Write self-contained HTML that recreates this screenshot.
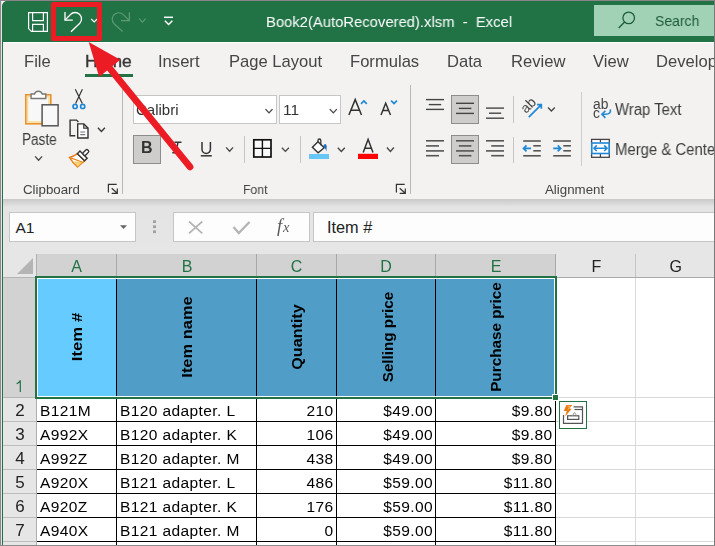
<!DOCTYPE html>
<html><head><meta charset="utf-8"><style>
html,body{margin:0;padding:0;}
body{width:715px;height:546px;position:relative;overflow:hidden;background:#fff;font-family:"Liberation Sans",sans-serif;}
svg{overflow:visible}
</style></head><body>
<div style="position:absolute;left:2px;top:1px;width:712px;height:41px;background:#217346;border-top-left-radius:5px"></div>
<svg style="position:absolute;left:0px;top:0px;" width="715" height="546" viewBox="0 0 715 546"><path d="M28.6 12.6 H47.4 V31.4 H31.4 L28.6 28.6 Z" fill="none" stroke="#fff" stroke-width="1.2"/><path d="M32.6 12.6 V20.6 H43.4 V12.6" fill="none" stroke="#fff" stroke-width="1.2"/><path d="M32.6 31.4 V24.4 H43.4 V31.4" fill="none" stroke="#fff" stroke-width="1.2"/><path d="M65 12 V20.2 H72.8" fill="none" stroke="#fff" stroke-width="1.3"/><path d="M65 20 L70.5 14.5 A6.3 6.3 0 0 1 79.8 23.2 L71 31.8" fill="none" stroke="#fff" stroke-width="1.3"/><path d="M91.2 19.0 L94.2 22.0 L97.2 19.0" fill="none" stroke="#fff" stroke-width="1.1"/><path d="M129.4 12.3 V20.7 H121" fill="none" stroke="#5d9a76" stroke-width="1.2"/><path d="M129.4 20.7 L123.5 14.8 A6.5 6.5 0 0 0 114 23.7 L122.7 31.5" fill="none" stroke="#5d9a76" stroke-width="1.2"/><path d="M139.15 18.65 L142.4 22.15 L145.65 18.65" fill="none" stroke="#5d9a76" stroke-width="1.1"/><path d="M164 17.3 H173" stroke="#fff" stroke-width="1.5"/><path d="M164.85 20.700000000000003 L168.6 24.5 L172.35 20.700000000000003" fill="none" stroke="#fff" stroke-width="1.5"/></svg>
<div style="position:absolute;left:51px;top:2px;width:41px;height:29px;border:5px solid #ec1c24;border-radius:2px"></div>
<div style="position:absolute;left:265.8px;top:14.00px;font-size:15.2px;line-height:15.2px;color:#fff;font-weight:normal;white-space:pre;will-change:transform;transform:scaleX(0.975);transform-origin:0 0;">Book2(AutoRecovered).xlsm  -  Excel</div>
<div style="position:absolute;left:594px;top:5px;width:120px;height:31px;background:#a1d2b5"></div>
<svg style="position:absolute;left:594px;top:5px;" width="120" height="31" viewBox="594 5 120 31"><circle cx="628.7" cy="17.9" r="5.8" fill="none" stroke="#1f5c3b" stroke-width="1.3"/><path d="M624.6 22 L618.7 28" stroke="#1f5c3b" stroke-width="1.4"/></svg>
<div style="position:absolute;left:655px;top:13.00px;font-size:15.2px;line-height:15.2px;color:#1f5c3b;font-weight:normal;white-space:pre;will-change:transform;transform:scaleX(0.92);transform-origin:0 0;">Search</div>
<div style="position:absolute;left:3px;top:42px;width:711px;height:1px;background:#fff"></div>
<div style="position:absolute;left:3px;top:43px;width:711px;height:156px;background:#f3f2f1"></div>
<div style="position:absolute;left:84.8px;top:54.00px;font-size:16.6px;line-height:16.6px;color:#383838;font-weight:normal;white-space:pre;will-change:transform;-webkit-text-stroke:0.4px #383838;transform:scaleX(1.055);transform-origin:0 0;">Home</div>
<div style="position:absolute;left:23.8px;top:54.00px;font-size:16.6px;line-height:16.6px;color:#454545;font-weight:normal;white-space:pre;will-change:transform;">File</div>
<div style="position:absolute;left:158.4px;top:54.00px;font-size:16.6px;line-height:16.6px;color:#454545;font-weight:normal;white-space:pre;will-change:transform;">Insert</div>
<div style="position:absolute;left:229.4px;top:54.00px;font-size:16.6px;line-height:16.6px;color:#454545;font-weight:normal;white-space:pre;will-change:transform;">Page Layout</div>
<div style="position:absolute;left:349.8px;top:54.00px;font-size:16.6px;line-height:16.6px;color:#454545;font-weight:normal;white-space:pre;will-change:transform;">Formulas</div>
<div style="position:absolute;left:446.8px;top:54.00px;font-size:16.6px;line-height:16.6px;color:#454545;font-weight:normal;white-space:pre;will-change:transform;">Data</div>
<div style="position:absolute;left:510.8px;top:54.00px;font-size:16.6px;line-height:16.6px;color:#454545;font-weight:normal;white-space:pre;will-change:transform;">Review</div>
<div style="position:absolute;left:592.6px;top:54.00px;font-size:16.6px;line-height:16.6px;color:#454545;font-weight:normal;white-space:pre;will-change:transform;">View</div>
<div style="position:absolute;left:655.8px;top:54.00px;font-size:16.6px;line-height:16.6px;color:#454545;font-weight:normal;white-space:pre;will-change:transform;">Develop</div>
<div style="position:absolute;left:85px;top:74px;width:48px;height:3px;background:#217346"></div>
<div style="position:absolute;left:122px;top:85px;width:1px;height:109px;background:#b9b7b5"></div>
<div style="position:absolute;left:410px;top:85px;width:1px;height:109px;background:#b9b7b5"></div>
<div style="position:absolute;left:581px;top:92px;width:1px;height:74px;background:#cfcdcb"></div>
<div style="position:absolute;left:244px;top:136px;width:1px;height:27px;background:#c8c6c4"></div>
<div style="position:absolute;left:300px;top:136px;width:1px;height:27px;background:#c8c6c4"></div>
<div style="position:absolute;left:513px;top:96px;width:1px;height:27px;background:#c8c6c4"></div>
<div style="position:absolute;left:513px;top:137px;width:1px;height:26px;background:#c8c6c4"></div>
<svg style="position:absolute;left:0px;top:0px;" width="715" height="546" viewBox="0 0 715 546"><rect x="25.8" y="94.8" width="25" height="29" fill="#f8f8f8" stroke="#e8912d" stroke-width="1.6"/><rect x="27.6" y="96.6" width="21.4" height="25.4" fill="none" stroke="#f9d98b" stroke-width="1.4"/><path d="M31.1 98.5 V94 H34.5 A4.1 4.1 0 0 1 42.2 94 H45.8 V98.5 Z" fill="#fff" stroke="#777" stroke-width="1.4"/><rect x="42.1" y="104.8" width="16" height="21" fill="#f8f8f8" stroke="#555" stroke-width="1.5"/><path d="M35.1 156.4 L38.6 160.20000000000002 L42.1 156.4" fill="none" stroke="#444" stroke-width="1.3"/><path d="M75.3 89.3 L82.3 103.6 M82.4 89.3 L75.6 103.6" stroke="#333" stroke-width="1.2"/><circle cx="75.1" cy="106.4" r="2.1" fill="none" stroke="#1f88d6" stroke-width="1.7"/><circle cx="82.7" cy="106.4" r="2.1" fill="none" stroke="#1f88d6" stroke-width="1.7"/><path d="M75.3 135.8 H70.1 V120.1 H76.6 L78.4 122" fill="none" stroke="#333" stroke-width="1.4"/><path d="M77.7 123.9 H83.8 L88 128.1 V138 H77.7 Z" fill="#fff" stroke="#333" stroke-width="1.4"/><path d="M83.8 123.9 V128.1 H88" fill="none" stroke="#333" stroke-width="1.2"/><path d="M80.3 132 H85.2 M80.3 134.6 H85.2" stroke="#777" stroke-width="1.1"/><path d="M97.9 127.75 L101.4 131.45 L104.9 127.75" fill="none" stroke="#333" stroke-width="1.3"/><g transform="translate(81 157.25) rotate(45)"><path d="M-5 0 Q-5.5 4 -8 8.3 Q-1 10 4.4 9.4 Q4.5 4 5 0 Z" fill="#fff" stroke="#e8821e" stroke-width="1.5"/><path d="M-2.3 7.8 L4.6 2.6 L4.3 9.2 Z" fill="#f8cf6a" stroke="none"/><path d="M-7.5 8 L4.7 2.4" fill="none" stroke="#e8821e" stroke-width="1.2"/><rect x="-5.1" y="-3.6" width="10.2" height="3.6" fill="#fff" stroke="#333" stroke-width="1.4"/><rect x="-1.7" y="-10" width="3.4" height="6.4" rx="1.4" fill="#fff" stroke="#333" stroke-width="1.4"/></g><path d="M108.4 192.6 V184.4 H116.7" fill="none" stroke="#333" stroke-width="1.2"/><path d="M111.7 188.20000000000002 L117.30000000000001 193.3 M117.30000000000001 188.5 V193.3 H111.7" fill="none" stroke="#333" stroke-width="1.2"/><path d="M396.4 192.6 V184.4 H404.7" fill="none" stroke="#333" stroke-width="1.2"/><path d="M399.7 188.20000000000002 L405.29999999999995 193.3 M405.29999999999995 188.5 V193.3 H399.7" fill="none" stroke="#333" stroke-width="1.2"/></svg>
<div style="position:absolute;left:22px;top:132.00px;font-size:15.8px;line-height:15.8px;color:#3b3b3b;font-weight:normal;white-space:pre;will-change:transform;transform:scaleX(0.86);transform-origin:0 0;">Paste</div>
<div style="position:absolute;left:23px;top:183.00px;font-size:13.3px;line-height:13.3px;color:#444;font-weight:normal;white-space:pre;will-change:transform;">Clipboard</div>
<div style="position:absolute;left:243px;top:183.00px;font-size:13.3px;line-height:13.3px;color:#444;font-weight:normal;white-space:pre;will-change:transform;transform:scaleX(0.92);transform-origin:0 0;">Font</div>
<div style="position:absolute;left:545px;top:183.00px;font-size:13.3px;line-height:13.3px;color:#444;font-weight:normal;white-space:pre;will-change:transform;">Alignment</div>
<div style="position:absolute;left:133px;top:95px;width:142px;height:27px;background:#fff;border:1px solid #c8c6c4"></div>
<div style="position:absolute;left:135.5px;top:102.00px;font-size:15px;line-height:15px;color:#333;font-weight:normal;white-space:pre;will-change:transform;">Calibri</div>
<div style="position:absolute;left:279px;top:95px;width:60px;height:27px;background:#fff;border:1px solid #c8c6c4"></div>
<div style="position:absolute;left:282.5px;top:102.00px;font-size:15.5px;line-height:15.5px;color:#333;font-weight:normal;white-space:pre;will-change:transform;">11</div>
<div style="position:absolute;left:133px;top:135px;width:26px;height:27px;background:#cfcdcb;border:1px solid #8f8d8b"></div>
<div style="position:absolute;left:141.3px;top:140.00px;font-size:16px;line-height:16px;color:#333;font-weight:bold;white-space:pre;will-change:transform;">B</div>
<svg style="position:absolute;left:0px;top:0px;" width="715" height="546" viewBox="0 0 715 546"><path d="M265.5 109.1 L269 112.9 L272.5 109.1" fill="none" stroke="#444" stroke-width="1.3"/><path d="M329.8 109.1 L333.3 112.9 L336.8 109.1" fill="none" stroke="#444" stroke-width="1.3"/><path d="M348.9 115 L355.2 99.6 L361.5 115 M350.8 110.2 H359.6" fill="none" stroke="#333" stroke-width="1.5"/><path d="M361 103.8 L363.9 100.9 L366.8 103.8" fill="none" stroke="#1f88d6" stroke-width="1.7"/><path d="M381 115 L385.7 103.3 L390.5 115 M382.6 110.5 H388.9" fill="none" stroke="#333" stroke-width="1.5"/><path d="M391.1 100.6 L394 103.5 L396.9 100.6" fill="none" stroke="#1f88d6" stroke-width="1.7"/><path d="M174.5 142.3 H181.5 M172.3 152.8 H179.3 M178 142.3 L175.8 152.8" fill="none" stroke="#333" stroke-width="1.4"/><path d="M202 142 V149.3 A4.2 4.2 0 0 0 210.4 149.3 V142" fill="none" stroke="#333" stroke-width="1.5"/><path d="M200.8 155.8 H211.8" stroke="#333" stroke-width="1.5"/><path d="M226.1 147.4 L229.6 151.20000000000002 L233.1 147.4" fill="none" stroke="#444" stroke-width="1.3"/><rect x="253.8" y="139.8" width="17.2" height="17.2" fill="#fafafa" stroke="#111" stroke-width="1.7"/><path d="M262.4 139.8 V157 M253.8 148.4 H271" stroke="#111" stroke-width="1.4"/><path d="M281.9 147.79999999999998 L285.4 151.4 L288.9 147.79999999999998" fill="none" stroke="#444" stroke-width="1.3"/><path d="M312.4 147.3 L318 141.7 L324.2 147.7 L318.1 152.8 Z" fill="#fff" stroke="#333" stroke-width="1.4"/><path d="M318 141.7 V140.4 A1.4 1.4 0 0 1 320.8 140.4 V145.3" fill="none" stroke="#333" stroke-width="1.3"/><path d="M323.3 145.8 Q325.3 142.3 326.8 146 L326.4 151.5 Q325.6 148.5 324.2 147.2 Z" fill="#1f6fc0"/><rect x="309" y="154" width="20" height="5" fill="#66c6f8"/><path d="M337.8 147.7 L341.3 151.5 L344.8 147.7" fill="none" stroke="#444" stroke-width="1.3"/><path d="M363.2 152.5 L368.1 139.3 L373 152.5 M364.8 148.2 H371.4" fill="none" stroke="#333" stroke-width="1.5"/><rect x="358" y="153.8" width="20" height="5.2" fill="#ff0000"/><path d="M386.9 147.5 L390.4 151.5 L393.9 147.5" fill="none" stroke="#444" stroke-width="1.3"/></svg>
<div style="position:absolute;left:451px;top:95px;width:26px;height:27px;background:#cfcdcb;border:1px solid #8f8d8b"></div>
<div style="position:absolute;left:451px;top:135px;width:26px;height:27px;background:#cfcdcb;border:1px solid #8f8d8b"></div>
<svg style="position:absolute;left:0px;top:0px;" width="715" height="546" viewBox="0 0 715 546"><path d="M426 99.6 H444" stroke="#444" stroke-width="1.4"/><path d="M428.8 104.6 H441.2" stroke="#444" stroke-width="1.4"/><path d="M426 109.4 H444" stroke="#444" stroke-width="1.4"/><path d="M456 103.3 H474" stroke="#444" stroke-width="1.4"/><path d="M458.8 108.4 H471.4" stroke="#444" stroke-width="1.4"/><path d="M456 113.4 H474" stroke="#444" stroke-width="1.4"/><path d="M486 108.1 H504" stroke="#444" stroke-width="1.4"/><path d="M489 113.2 H501.2" stroke="#444" stroke-width="1.4"/><path d="M486 118.2 H504" stroke="#444" stroke-width="1.4"/><path d="M426 140.8 H444" stroke="#555" stroke-width="1.6"/><path d="M426 145.9 H439" stroke="#555" stroke-width="1.6"/><path d="M426 150.9 H444" stroke="#555" stroke-width="1.6"/><path d="M426 155.7 H439" stroke="#555" stroke-width="1.6"/><path d="M456 140.8 H474" stroke="#555" stroke-width="1.6"/><path d="M458.8 145.9 H471.4" stroke="#555" stroke-width="1.6"/><path d="M456 150.9 H474" stroke="#555" stroke-width="1.6"/><path d="M458.8 155.7 H471.4" stroke="#555" stroke-width="1.6"/><path d="M486 140.8 H504" stroke="#555" stroke-width="1.6"/><path d="M491.2 145.9 H504" stroke="#555" stroke-width="1.6"/><path d="M486 150.9 H504" stroke="#555" stroke-width="1.6"/><path d="M491.2 155.7 H504" stroke="#555" stroke-width="1.6"/><path d="M523.2 141 H540.8" stroke="#555" stroke-width="1.6"/><path d="M533.3 145.8 H540.8" stroke="#555" stroke-width="1.6"/><path d="M533.3 150.8 H540.8" stroke="#555" stroke-width="1.6"/><path d="M523.2 155.8 H540.8" stroke="#555" stroke-width="1.6"/><path d="M553.2 141 H570.9" stroke="#555" stroke-width="1.6"/><path d="M563.3 145.8 H570.9" stroke="#555" stroke-width="1.6"/><path d="M563.3 150.8 H570.9" stroke="#555" stroke-width="1.6"/><path d="M553.2 155.8 H570.9" stroke="#555" stroke-width="1.6"/><path d="M523.5 148.4 H531 M526.5 145.4 L523.5 148.4 L526.5 151.4" fill="none" stroke="#1f88d6" stroke-width="1.7"/><path d="M553.2 148.4 H560.7 M557.7 145.4 L560.7 148.4 L557.7 151.4" fill="none" stroke="#1f88d6" stroke-width="1.7"/><path d="M528.8 117.2 L541.3 104.6 M537 104.6 H541.3 V108.7" fill="none" stroke="#1f88d6" stroke-width="1.7"/><path d="M548.0 107.55 L551.4 111.05 L554.8 107.55" fill="none" stroke="#444" stroke-width="1.3"/><path d="M610.3 109.3 Q611.3 114.3 605.5 114.3 H602.3" fill="none" stroke="#1f88d6" stroke-width="1.6"/><path d="M605.4 110.9 L601.9 114.3 L605.4 117.9" fill="none" stroke="#1f88d6" stroke-width="1.6"/><rect x="591.6" y="139.4" width="17.7" height="17.9" fill="#fff" stroke="#444" stroke-width="1.3"/><path d="M600.4 139.4 V142.5 M600.4 153.8 V157.3" stroke="#444" stroke-width="1.2"/><rect x="591.8" y="143" width="17.3" height="10.5" fill="#fff" stroke="#1f88d6" stroke-width="1.6"/><path d="M594 148.2 H607 M596.8 145.4 L594 148.2 L596.8 151 M604.2 145.4 L607 148.2 L604.2 151" fill="none" stroke="#1f88d6" stroke-width="1.6"/></svg>
<div style="position:absolute;left:525.8px;top:101.55px;font-size:14px;line-height:14px;color:#444;white-space:pre;transform:rotate(-45deg);transform-origin:0 11.85px">ab</div>
<div style="position:absolute;left:593.3px;top:98.00px;font-size:13.8px;line-height:13.8px;color:#444;font-weight:normal;white-space:pre;will-change:transform;transform:scaleX(0.97);transform-origin:0 0;">ab</div>
<div style="position:absolute;left:593.3px;top:107.00px;font-size:13.8px;line-height:13.8px;color:#444;font-weight:normal;white-space:pre;will-change:transform;">c</div>
<div style="position:absolute;left:614.8px;top:102.00px;font-size:15.6px;line-height:15.6px;color:#3b3b3b;font-weight:normal;white-space:pre;will-change:transform;transform:scaleX(0.955);transform-origin:0 0;">Wrap Text</div>
<div style="position:absolute;left:614.8px;top:142.00px;font-size:15.6px;line-height:15.6px;color:#3b3b3b;font-weight:normal;white-space:pre;will-change:transform;transform:scaleX(0.955);transform-origin:0 0;">Merge &amp; Center</div>
<div style="position:absolute;left:3px;top:199px;width:711px;height:55px;background:linear-gradient(#c9c9c9,#e4e4e4 8px,#e6e6e6)"></div>
<div style="position:absolute;left:9px;top:212px;width:125px;height:28px;background:#fdfdfd;border:1px solid #c6c6c6"></div>
<div style="position:absolute;left:15.5px;top:220.00px;font-size:15.5px;line-height:15.5px;color:#222;font-weight:normal;white-space:pre;">A1</div>
<div style="position:absolute;left:173px;top:212px;width:135px;height:28px;background:#fdfdfd;border:1px solid #c6c6c6"></div>
<div style="position:absolute;left:313px;top:212px;width:401px;height:28px;background:#fdfdfd;border:1px solid #c6c6c6;border-right:none"></div>
<svg style="position:absolute;left:0px;top:0px;" width="715" height="546" viewBox="0 0 715 546"><path d="M120 225.2 H127 L123.5 229 Z" fill="#666"/><rect x="153" y="220.3" width="3" height="2.7" fill="#a0a0a0"/><rect x="153" y="225.4" width="3" height="2.7" fill="#a0a0a0"/><rect x="153" y="230.4" width="3" height="2.7" fill="#a0a0a0"/><path d="M189 221.5 L202.3 233.3 M202.3 221.5 L189 233.3" stroke="#b4b4b4" stroke-width="1.7"/><path d="M233.5 227 L238.8 233 L249.5 222" fill="none" stroke="#b4b4b4" stroke-width="2.3"/></svg>
<div style="position:absolute;left:276.5px;top:217.00px;font-size:18.5px;line-height:18.5px;color:#5a5a5a;font-weight:normal;white-space:pre;will-change:transform;font-family:Liberation Serif;font-style:italic;">f</div>
<div style="position:absolute;left:283.2px;top:220.00px;font-size:14.5px;line-height:14.5px;color:#5a5a5a;font-weight:normal;white-space:pre;will-change:transform;font-family:Liberation Serif;font-style:italic;">x</div>
<div style="position:absolute;left:327px;top:220.00px;font-size:15.8px;line-height:15.8px;color:#222;font-weight:normal;white-space:pre;transform:scaleX(1.03);transform-origin:0 0;">Item #</div>
<div style="position:absolute;left:3px;top:254px;width:33px;height:23px;background:#e6e6e6"></div>
<svg style="position:absolute;left:0px;top:0px;" width="715" height="546" viewBox="0 0 715 546"><path d="M33 258 V274 H17 Z" fill="#b4b4b4"/></svg>
<div style="position:absolute;left:36px;top:254px;width:520px;height:22px;background:#d2d2d2"></div>
<div style="position:absolute;left:556px;top:254px;width:158px;height:23px;background:#e6e6e6"></div>
<div style="position:absolute;left:556px;top:277px;width:158px;height:1px;background:#ababab"></div>
<div style="position:absolute;left:116px;top:254px;width:1px;height:22px;background:#a8a8a8"></div>
<div style="position:absolute;left:256px;top:254px;width:1px;height:22px;background:#a8a8a8"></div>
<div style="position:absolute;left:336px;top:254px;width:1px;height:22px;background:#a8a8a8"></div>
<div style="position:absolute;left:435px;top:254px;width:1px;height:22px;background:#a8a8a8"></div>
<div style="position:absolute;left:555px;top:254px;width:1px;height:22px;background:#a8a8a8"></div>
<div style="position:absolute;left:635px;top:254px;width:1px;height:23px;background:#c4c4c4"></div>
<div style="position:absolute;left:56.5px;width:40px;text-align:center;top:259px;font-size:16px;line-height:16px;color:#217346">A</div>
<div style="position:absolute;left:167px;width:40px;text-align:center;top:259px;font-size:16px;line-height:16px;color:#217346">B</div>
<div style="position:absolute;left:276.5px;width:40px;text-align:center;top:259px;font-size:16px;line-height:16px;color:#217346">C</div>
<div style="position:absolute;left:366px;width:40px;text-align:center;top:259px;font-size:16px;line-height:16px;color:#217346">D</div>
<div style="position:absolute;left:476px;width:40px;text-align:center;top:259px;font-size:16px;line-height:16px;color:#217346">E</div>
<div style="position:absolute;left:576.5px;width:40px;text-align:center;top:259px;font-size:16px;line-height:16px;color:#222">F</div>
<div style="position:absolute;left:655.8px;width:40px;text-align:center;top:259px;font-size:16px;line-height:16px;color:#222">G</div>
<div style="position:absolute;left:3px;top:278px;width:33px;height:119px;background:#d2d2d2"></div>
<div style="position:absolute;left:3px;top:397px;width:33px;height:149px;background:#e6e6e6"></div>
<div style="position:absolute;left:36px;top:254px;width:1px;height:292px;background:#b0b0b0"></div>
<div style="position:absolute;left:3px;top:421px;width:33px;height:1px;background:#bdbdbd"></div>
<div style="position:absolute;left:3px;top:445px;width:33px;height:1px;background:#bdbdbd"></div>
<div style="position:absolute;left:3px;top:469px;width:33px;height:1px;background:#bdbdbd"></div>
<div style="position:absolute;left:3px;top:493px;width:33px;height:1px;background:#bdbdbd"></div>
<div style="position:absolute;left:3px;top:517px;width:33px;height:1px;background:#bdbdbd"></div>
<div style="position:absolute;left:3px;top:541px;width:33px;height:1px;background:#bdbdbd"></div>
<svg style="position:absolute;left:0px;top:0px;" width="715" height="546" viewBox="0 0 715 546"><path d="M20.3 380.3 V392 M20.3 380.6 Q19 383 16.6 383.8" fill="none" stroke="#217346" stroke-width="1.2"/></svg>
<div style="position:absolute;left:3px;top:397px;width:33px;height:1px;background:#b4b4b4"></div>
<div style="position:absolute;left:3.5px;width:33px;text-align:center;top:402px;font-size:17px;line-height:17px;color:#222">2</div>
<div style="position:absolute;left:3.5px;width:33px;text-align:center;top:426px;font-size:17px;line-height:17px;color:#222">3</div>
<div style="position:absolute;left:3.5px;width:33px;text-align:center;top:450px;font-size:17px;line-height:17px;color:#222">4</div>
<div style="position:absolute;left:3.5px;width:33px;text-align:center;top:474px;font-size:17px;line-height:17px;color:#222">5</div>
<div style="position:absolute;left:3.5px;width:33px;text-align:center;top:498px;font-size:17px;line-height:17px;color:#222">6</div>
<div style="position:absolute;left:3.5px;width:33px;text-align:center;top:522px;font-size:17px;line-height:17px;color:#222">7</div>
<div style="position:absolute;left:37px;top:278px;width:677px;height:268px;background:#fff"></div>
<div style="position:absolute;left:37px;top:277px;width:79px;height:120px;background:#66ccff"></div>
<div style="position:absolute;left:117px;top:277px;width:438px;height:120px;background:#509ec7"></div>
<div style="position:absolute;left:556px;top:397px;width:158px;height:1px;background:#d9d9d9"></div>
<div style="position:absolute;left:556px;top:421px;width:158px;height:1px;background:#d9d9d9"></div>
<div style="position:absolute;left:556px;top:445px;width:158px;height:1px;background:#d9d9d9"></div>
<div style="position:absolute;left:556px;top:469px;width:158px;height:1px;background:#d9d9d9"></div>
<div style="position:absolute;left:556px;top:493px;width:158px;height:1px;background:#d9d9d9"></div>
<div style="position:absolute;left:556px;top:517px;width:158px;height:1px;background:#d9d9d9"></div>
<div style="position:absolute;left:556px;top:541px;width:158px;height:1px;background:#d9d9d9"></div>
<div style="position:absolute;left:635px;top:278px;width:1px;height:268px;background:#d9d9d9"></div>
<div style="position:absolute;left:116px;top:277px;width:1px;height:269px;background:#000"></div>
<div style="position:absolute;left:256px;top:277px;width:1px;height:269px;background:#000"></div>
<div style="position:absolute;left:336px;top:277px;width:1px;height:269px;background:#000"></div>
<div style="position:absolute;left:435px;top:277px;width:1px;height:269px;background:#000"></div>
<div style="position:absolute;left:555px;top:277px;width:1px;height:269px;background:#000"></div>
<div style="position:absolute;left:37px;top:397px;width:519px;height:1px;background:#000"></div>
<div style="position:absolute;left:37px;top:421px;width:519px;height:1px;background:#000"></div>
<div style="position:absolute;left:37px;top:445px;width:519px;height:1px;background:#000"></div>
<div style="position:absolute;left:37px;top:469px;width:519px;height:1px;background:#000"></div>
<div style="position:absolute;left:37px;top:493px;width:519px;height:1px;background:#000"></div>
<div style="position:absolute;left:37px;top:517px;width:519px;height:1px;background:#000"></div>
<div style="position:absolute;left:37px;top:541px;width:519px;height:1px;background:#000"></div>
<div style="position:absolute;left:-3.200000000000003px;top:328.9px;width:160px;height:16px;line-height:16px;text-align:center;font-size:15.3px;font-weight:bold;color:#000;transform:rotate(-90deg) scaleX(1.095);white-space:pre">Item #</div>
<div style="position:absolute;left:107.19999999999999px;top:328.7px;width:160px;height:16px;line-height:16px;text-align:center;font-size:15.3px;font-weight:bold;color:#000;transform:rotate(-90deg) scaleX(1.075);white-space:pre">Item name</div>
<div style="position:absolute;left:217px;top:328.7px;width:160px;height:16px;line-height:16px;text-align:center;font-size:15.3px;font-weight:bold;color:#000;transform:rotate(-90deg) scaleX(1.055);white-space:pre">Quantity</div>
<div style="position:absolute;left:308px;top:329.1px;width:160px;height:16px;line-height:16px;text-align:center;font-size:15.3px;font-weight:bold;color:#000;transform:rotate(-90deg) scaleX(0.995);white-space:pre">Selling price</div>
<div style="position:absolute;left:415.5px;top:328.5px;width:160px;height:16px;line-height:16px;text-align:center;font-size:15.3px;font-weight:bold;color:#000;transform:rotate(-90deg) scaleX(1.0);white-space:pre">Purchase price</div>
<div style="position:absolute;left:40px;top:403.00px;font-size:15.5px;line-height:15.5px;white-space:pre;letter-spacing:0.4px;">B121M</div>
<div style="position:absolute;left:120px;top:403.00px;font-size:15.5px;line-height:15.5px;white-space:pre;letter-spacing:0.4px;">B120 adapter. L</div>
<div style="position:absolute;left:183.5px;width:150px;text-align:right;top:403.00px;font-size:15.5px;line-height:15.5px;white-space:pre;letter-spacing:0.4px;">210</div>
<div style="position:absolute;left:283px;width:150px;text-align:right;top:403.00px;font-size:15.5px;line-height:15.5px;white-space:pre;letter-spacing:0.4px;">$49.00</div>
<div style="position:absolute;left:402.5px;width:150px;text-align:right;top:403.00px;font-size:15.5px;line-height:15.5px;white-space:pre;letter-spacing:0.4px;">$9.80</div>
<div style="position:absolute;left:40px;top:427.00px;font-size:15.5px;line-height:15.5px;white-space:pre;letter-spacing:0.4px;">A992X</div>
<div style="position:absolute;left:120px;top:427.00px;font-size:15.5px;line-height:15.5px;white-space:pre;letter-spacing:0.4px;">B120 adapter. K</div>
<div style="position:absolute;left:183.5px;width:150px;text-align:right;top:427.00px;font-size:15.5px;line-height:15.5px;white-space:pre;letter-spacing:0.4px;">106</div>
<div style="position:absolute;left:283px;width:150px;text-align:right;top:427.00px;font-size:15.5px;line-height:15.5px;white-space:pre;letter-spacing:0.4px;">$49.00</div>
<div style="position:absolute;left:402.5px;width:150px;text-align:right;top:427.00px;font-size:15.5px;line-height:15.5px;white-space:pre;letter-spacing:0.4px;">$9.80</div>
<div style="position:absolute;left:40px;top:451.00px;font-size:15.5px;line-height:15.5px;white-space:pre;letter-spacing:0.4px;">A992Z</div>
<div style="position:absolute;left:120px;top:451.00px;font-size:15.5px;line-height:15.5px;white-space:pre;letter-spacing:0.4px;">B120 adapter. M</div>
<div style="position:absolute;left:183.5px;width:150px;text-align:right;top:451.00px;font-size:15.5px;line-height:15.5px;white-space:pre;letter-spacing:0.4px;">438</div>
<div style="position:absolute;left:283px;width:150px;text-align:right;top:451.00px;font-size:15.5px;line-height:15.5px;white-space:pre;letter-spacing:0.4px;">$49.00</div>
<div style="position:absolute;left:402.5px;width:150px;text-align:right;top:451.00px;font-size:15.5px;line-height:15.5px;white-space:pre;letter-spacing:0.4px;">$9.80</div>
<div style="position:absolute;left:40px;top:475.00px;font-size:15.5px;line-height:15.5px;white-space:pre;letter-spacing:0.4px;">A920X</div>
<div style="position:absolute;left:120px;top:475.00px;font-size:15.5px;line-height:15.5px;white-space:pre;letter-spacing:0.4px;">B121 adapter. L</div>
<div style="position:absolute;left:183.5px;width:150px;text-align:right;top:475.00px;font-size:15.5px;line-height:15.5px;white-space:pre;letter-spacing:0.4px;">486</div>
<div style="position:absolute;left:283px;width:150px;text-align:right;top:475.00px;font-size:15.5px;line-height:15.5px;white-space:pre;letter-spacing:0.4px;">$59.00</div>
<div style="position:absolute;left:402.5px;width:150px;text-align:right;top:475.00px;font-size:15.5px;line-height:15.5px;white-space:pre;letter-spacing:0.4px;">$11.80</div>
<div style="position:absolute;left:40px;top:499.00px;font-size:15.5px;line-height:15.5px;white-space:pre;letter-spacing:0.4px;">A920Z</div>
<div style="position:absolute;left:120px;top:499.00px;font-size:15.5px;line-height:15.5px;white-space:pre;letter-spacing:0.4px;">B121 adapter. K</div>
<div style="position:absolute;left:183.5px;width:150px;text-align:right;top:499.00px;font-size:15.5px;line-height:15.5px;white-space:pre;letter-spacing:0.4px;">176</div>
<div style="position:absolute;left:283px;width:150px;text-align:right;top:499.00px;font-size:15.5px;line-height:15.5px;white-space:pre;letter-spacing:0.4px;">$59.00</div>
<div style="position:absolute;left:402.5px;width:150px;text-align:right;top:499.00px;font-size:15.5px;line-height:15.5px;white-space:pre;letter-spacing:0.4px;">$11.80</div>
<div style="position:absolute;left:40px;top:523.00px;font-size:15.5px;line-height:15.5px;white-space:pre;letter-spacing:0.4px;">A940X</div>
<div style="position:absolute;left:120px;top:523.00px;font-size:15.5px;line-height:15.5px;white-space:pre;letter-spacing:0.4px;">B121 adapter. M</div>
<div style="position:absolute;left:183.5px;width:150px;text-align:right;top:523.00px;font-size:15.5px;line-height:15.5px;white-space:pre;letter-spacing:0.4px;">0</div>
<div style="position:absolute;left:283px;width:150px;text-align:right;top:523.00px;font-size:15.5px;line-height:15.5px;white-space:pre;letter-spacing:0.4px;">$59.00</div>
<div style="position:absolute;left:402.5px;width:150px;text-align:right;top:523.00px;font-size:15.5px;line-height:15.5px;white-space:pre;letter-spacing:0.4px;">$11.80</div>
<div style="position:absolute;left:35px;top:276px;width:518px;height:119px;border:2px solid #217346"></div>
<div style="position:absolute;left:37px;top:278px;width:516px;height:117px;border:1px solid #fff"></div>
<div style="position:absolute;left:3px;top:277px;width:32px;height:1px;background:#b4b4b4"></div>
<div style="position:absolute;left:552px;top:394px;width:7px;height:7px;background:#fff"></div>
<div style="position:absolute;left:553px;top:395px;width:5px;height:5px;background:#217346"></div>
<div style="position:absolute;left:559px;top:401px;width:26px;height:26px;background:#fff;border:1px solid #217346"></div>
<svg style="position:absolute;left:0px;top:0px;" width="715" height="546" viewBox="0 0 715 546"><path d="M573.5 406.8 H582.5 V423.3 H563.5 V415" fill="none" stroke="#555" stroke-width="1.2"/><path d="M574.5 409.5 H582" stroke="#555" stroke-width="1.2"/><rect x="567.6" y="415.8" width="11.2" height="3.6" fill="#fff" stroke="#555" stroke-width="1.2"/><path d="M572.5 415.5 L574.5 412.3 L576.5 415.5" fill="none" stroke="#999" stroke-width="1"/><path d="M566.3 405 H572.2 L569.4 408.8 H571.8 L565 416.5 L566.8 411 H563.8 Z" fill="#ea7c14"/><path d="M567.5 406.3 H570 L568 409.5" fill="none" stroke="#f9c47a" stroke-width="0.8"/></svg>
<div style="position:absolute;left:0px;top:0px;width:715px;height:1px;background:#8a8486"></div>
<div style="position:absolute;left:0px;top:0px;width:1px;height:546px;background:#8c8c8c"></div>
<div style="position:absolute;left:1px;top:1px;width:1px;height:545px;background:#e4e4e4"></div>
<div style="position:absolute;left:2px;top:42px;width:1px;height:504px;background:#217346"></div>
<div style="position:absolute;left:714px;top:0px;width:1px;height:546px;background:#7a7a7a"></div>
<div style="position:absolute;left:0px;top:545px;width:715px;height:1px;background:#8c8c8c"></div>
<svg style="position:absolute;left:0px;top:0px;" width="715" height="546" viewBox="0 0 715 546"><path d="M109.8 68.3 L190 166.8" stroke="#ec1c24" stroke-width="6.8" stroke-linecap="round"/><path d="M88.7 41.9 L120.3 59.7 L99.2 77.1 Z" fill="#ec1c24"/></svg>
</body></html>
